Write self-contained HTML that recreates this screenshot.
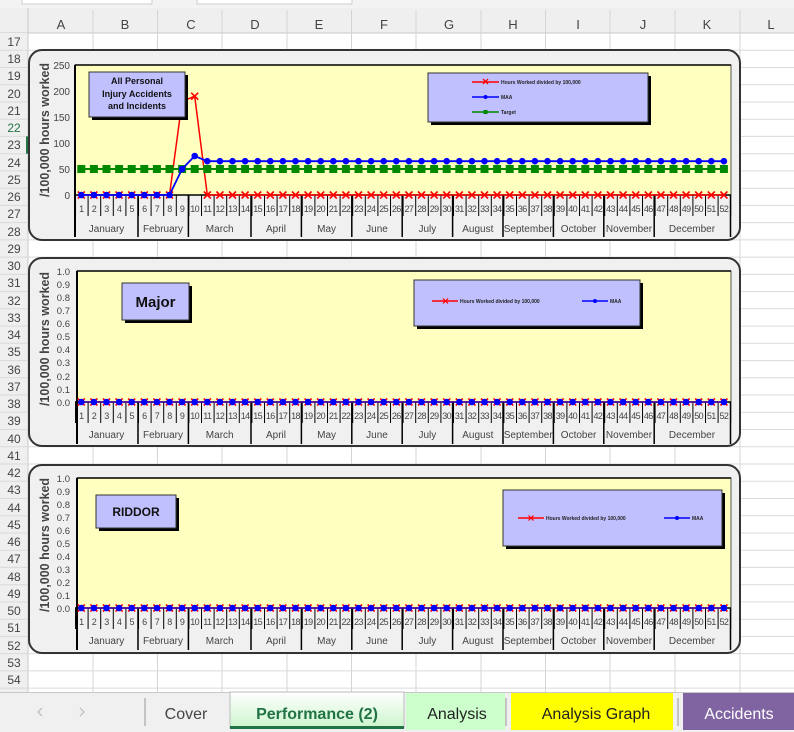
<!DOCTYPE html>
<html><head><meta charset="utf-8"><style>
html,body{margin:0;padding:0;width:794px;height:732px;overflow:hidden;background:#fff}
svg{display:block;font-family:"Liberation Sans",sans-serif}
</style></head><body>
<svg width="794" height="732" viewBox="0 0 794 732" xmlns="http://www.w3.org/2000/svg">
<defs>
<pattern id="tk" x="75" y="0" width="12.6" height="40" patternUnits="userSpaceOnUse"><rect x="0" y="0" width="1" height="40" fill="#000"/></pattern>
<marker id="mx" markerWidth="10" markerHeight="10" refX="5" refY="5" markerUnits="userSpaceOnUse"><path d="M1.5 1.5L8.5 8.5M8.5 1.5L1.5 8.5" stroke="#f00" stroke-width="1.6"/></marker>
<marker id="md" markerWidth="10" markerHeight="10" refX="5" refY="5" markerUnits="userSpaceOnUse"><circle cx="5" cy="5" r="3.3" fill="#00f"/></marker>
<marker id="ms" markerWidth="10" markerHeight="10" refX="5" refY="5" markerUnits="userSpaceOnUse"><rect x="1" y="1" width="8" height="8" fill="#080"/></marker>
</defs>
<rect x="0" y="0" width="794" height="8" fill="#f3f3f3"/>
<rect x="22" y="-2" width="130" height="6" fill="#fff" stroke="#ccc"/>
<rect x="197" y="-2" width="155" height="6" fill="#fff" stroke="#ccc"/>
<rect x="0" y="8" width="794" height="25" fill="#efefef"/>
<line x1="0" y1="33" x2="794" y2="33" stroke="#c8c8c8"/>
<rect x="0" y="33" width="28" height="660" fill="#efefef"/>
<line x1="28" y1="8" x2="28" y2="693" stroke="#c8c8c8"/>
<g stroke="#d4d4d4">
<line x1="93" y1="10" x2="93" y2="693"/><line x1="157.5" y1="10" x2="157.5" y2="693"/><line x1="222" y1="10" x2="222" y2="693"/><line x1="287" y1="10" x2="287" y2="693"/><line x1="351.5" y1="10" x2="351.5" y2="693"/><line x1="416" y1="10" x2="416" y2="693"/><line x1="481" y1="10" x2="481" y2="693"/><line x1="545.5" y1="10" x2="545.5" y2="693"/><line x1="610" y1="10" x2="610" y2="693"/><line x1="675" y1="10" x2="675" y2="693"/><line x1="740" y1="10" x2="740" y2="693"/>
</g>
<g stroke="#dadada">
<line x1="0" y1="50.2" x2="794" y2="50.2"/><line x1="0" y1="67.5" x2="794" y2="67.5"/><line x1="0" y1="84.7" x2="794" y2="84.7"/><line x1="0" y1="102" x2="794" y2="102"/><line x1="0" y1="119.2" x2="794" y2="119.2"/><line x1="0" y1="136.4" x2="794" y2="136.4"/><line x1="0" y1="153.7" x2="794" y2="153.7"/><line x1="0" y1="170.9" x2="794" y2="170.9"/><line x1="0" y1="188.2" x2="794" y2="188.2"/><line x1="0" y1="205.4" x2="794" y2="205.4"/><line x1="0" y1="222.6" x2="794" y2="222.6"/><line x1="0" y1="239.9" x2="794" y2="239.9"/><line x1="0" y1="257.1" x2="794" y2="257.1"/><line x1="0" y1="274.4" x2="794" y2="274.4"/><line x1="0" y1="291.6" x2="794" y2="291.6"/><line x1="0" y1="308.8" x2="794" y2="308.8"/><line x1="0" y1="326.1" x2="794" y2="326.1"/><line x1="0" y1="343.3" x2="794" y2="343.3"/><line x1="0" y1="360.6" x2="794" y2="360.6"/><line x1="0" y1="377.8" x2="794" y2="377.8"/><line x1="0" y1="395" x2="794" y2="395"/><line x1="0" y1="412.3" x2="794" y2="412.3"/><line x1="0" y1="429.5" x2="794" y2="429.5"/><line x1="0" y1="446.8" x2="794" y2="446.8"/><line x1="0" y1="464" x2="794" y2="464"/><line x1="0" y1="481.2" x2="794" y2="481.2"/><line x1="0" y1="498.5" x2="794" y2="498.5"/><line x1="0" y1="515.7" x2="794" y2="515.7"/><line x1="0" y1="533" x2="794" y2="533"/><line x1="0" y1="550.2" x2="794" y2="550.2"/><line x1="0" y1="567.4" x2="794" y2="567.4"/><line x1="0" y1="584.7" x2="794" y2="584.7"/><line x1="0" y1="601.9" x2="794" y2="601.9"/><line x1="0" y1="619.2" x2="794" y2="619.2"/><line x1="0" y1="636.4" x2="794" y2="636.4"/><line x1="0" y1="653.6" x2="794" y2="653.6"/><line x1="0" y1="670.9" x2="794" y2="670.9"/><line x1="0" y1="688.1" x2="794" y2="688.1"/>
</g>
<rect x="26" y="136.4" width="3" height="17.3" fill="#217346"/>
<g font-size="13" fill="#444" text-anchor="middle">
<text x="61" y="29">A</text><text x="125" y="29">B</text><text x="191" y="29">C</text><text x="255" y="29">D</text><text x="319" y="29">E</text><text x="384" y="29">F</text><text x="449" y="29">G</text><text x="513" y="29">H</text><text x="578" y="29">I</text><text x="643" y="29">J</text><text x="707" y="29">K</text><text x="771" y="29">L</text>
</g>
<g font-size="12" fill="#444" text-anchor="middle">
<text x="14" y="46">17</text><text x="14" y="63">18</text><text x="14" y="80">19</text><text x="14" y="98">20</text><text x="14" y="115">21</text><text x="14" y="132" fill="#217346">22</text><text x="14" y="149">23</text><text x="14" y="167">24</text><text x="14" y="184">25</text><text x="14" y="201">26</text><text x="14" y="218">27</text><text x="14" y="236">28</text><text x="14" y="253">29</text><text x="14" y="270">30</text><text x="14" y="287">31</text><text x="14" y="305">32</text><text x="14" y="322">33</text><text x="14" y="339">34</text><text x="14" y="356">35</text><text x="14" y="374">36</text><text x="14" y="391">37</text><text x="14" y="408">38</text><text x="14" y="425">39</text><text x="14" y="443">40</text><text x="14" y="460">41</text><text x="14" y="477">42</text><text x="14" y="494">43</text><text x="14" y="512">44</text><text x="14" y="529">45</text><text x="14" y="546">46</text><text x="14" y="563">47</text><text x="14" y="581">48</text><text x="14" y="598">49</text><text x="14" y="615">50</text><text x="14" y="632">51</text><text x="14" y="650">52</text><text x="14" y="667">53</text><text x="14" y="684">54</text>
</g>

<rect x="29" y="50" width="711" height="190" rx="13" fill="#f0f0f0" stroke="#333" stroke-width="2"/>
<rect x="75" y="65" width="656" height="130" fill="#ffffc0" stroke="#555" stroke-width="1"/>
<line x1="75" y1="65" x2="731" y2="65" stroke="#000" stroke-width="1.5"/>
<line x1="75" y1="65" x2="75" y2="237" stroke="#000" stroke-width="2"/>
<line x1="75" y1="195" x2="731" y2="195" stroke="#000" stroke-width="1.5"/>
<rect x="75" y="195" width="656.5" height="21" fill="url(#tk)"/>
<g stroke="#000" stroke-width="1.5"><line x1="138" y1="195" x2="138" y2="237"/><line x1="188.4" y1="195" x2="188.4" y2="237"/><line x1="251" y1="195" x2="251" y2="237"/><line x1="301.4" y1="195" x2="301.4" y2="237"/><line x1="351.8" y1="195" x2="351.8" y2="237"/><line x1="402.2" y1="195" x2="402.2" y2="237"/><line x1="452.6" y1="195" x2="452.6" y2="237"/><line x1="503" y1="195" x2="503" y2="237"/><line x1="553.4" y1="195" x2="553.4" y2="237"/><line x1="603.8" y1="195" x2="603.8" y2="237"/><line x1="654.2" y1="195" x2="654.2" y2="237"/><line x1="730.5" y1="195" x2="730.5" y2="237"/></g>
<g font-size="10" fill="#444" text-anchor="end"><text x="70" y="69">250</text><text x="70" y="95">200</text><text x="70" y="121">150</text><text x="70" y="147">100</text><text x="70" y="173">50</text><text x="70" y="199">0</text></g>
<text transform="translate(49,130) rotate(-90)" font-size="12.5" font-weight="bold" fill="#444" text-anchor="middle">/100,000 hours worked</text>
<text font-size="9" fill="#444" text-anchor="middle" letter-spacing="-0.6" y="212"><tspan x="81.3">1</tspan><tspan x="93.9">2</tspan><tspan x="106.5">3</tspan><tspan x="119.1">4</tspan><tspan x="131.7">5</tspan><tspan x="144.3">6</tspan><tspan x="156.9">7</tspan><tspan x="169.5">8</tspan><tspan x="182.1">9</tspan><tspan x="194.7">10</tspan><tspan x="207.3">11</tspan><tspan x="219.9">12</tspan><tspan x="232.5">13</tspan><tspan x="245.1">14</tspan><tspan x="257.7">15</tspan><tspan x="270.3">16</tspan><tspan x="282.9">17</tspan><tspan x="295.5">18</tspan><tspan x="308.1">19</tspan><tspan x="320.7">20</tspan><tspan x="333.3">21</tspan><tspan x="345.9">22</tspan><tspan x="358.5">23</tspan><tspan x="371.1">24</tspan><tspan x="383.7">25</tspan><tspan x="396.3">26</tspan><tspan x="408.9">27</tspan><tspan x="421.5">28</tspan><tspan x="434.1">29</tspan><tspan x="446.7">30</tspan><tspan x="459.3">31</tspan><tspan x="471.9">32</tspan><tspan x="484.5">33</tspan><tspan x="497.1">34</tspan><tspan x="509.7">35</tspan><tspan x="522.3">36</tspan><tspan x="534.9">37</tspan><tspan x="547.5">38</tspan><tspan x="560.1">39</tspan><tspan x="572.7">40</tspan><tspan x="585.3">41</tspan><tspan x="597.9">42</tspan><tspan x="610.5">43</tspan><tspan x="623.1">44</tspan><tspan x="635.7">45</tspan><tspan x="648.3">46</tspan><tspan x="660.9">47</tspan><tspan x="673.5">48</tspan><tspan x="686.1">49</tspan><tspan x="698.7">50</tspan><tspan x="711.3">51</tspan><tspan x="723.9">52</tspan></text>
<text font-size="10" fill="#444" text-anchor="middle" y="232"><tspan x="106.5">January</tspan><tspan x="163">February</tspan><tspan x="219.7">March</tspan><tspan x="276">April</tspan><tspan x="326.6">May</tspan><tspan x="377">June</tspan><tspan x="427.4">July</tspan><tspan x="477.8">August</tspan><tspan x="528.2">September</tspan><tspan x="578.6">October</tspan><tspan x="629">November</tspan><tspan x="692">December</tspan></text>
<path d="M81.3 195h12.6h12.6h12.6h12.6h12.6h12.6h12.6L182.1 101.4L194.7 96.2L207.3 195h12.6h12.6h12.6h12.6h12.6h12.6h12.6h12.6h12.6h12.6h12.6h12.6h12.6h12.6h12.6h12.6h12.6h12.6h12.6h12.6h12.6h12.6h12.6h12.6h12.6h12.6h12.6h12.6h12.6h12.6h12.6h12.6h12.6h12.6h12.6h12.6h12.6h12.6h12.6h12.6h12.6" fill="none" stroke="#f00" stroke-width="1.5" marker-start="url(#mx)" marker-mid="url(#mx)" marker-end="url(#mx)"/>
<path d="M81.3 169h12.6h12.6h12.6h12.6h12.6h12.6h12.6h12.6h12.6h12.6h12.6h12.6h12.6h12.6h12.6h12.6h12.6h12.6h12.6h12.6h12.6h12.6h12.6h12.6h12.6h12.6h12.6h12.6h12.6h12.6h12.6h12.6h12.6h12.6h12.6h12.6h12.6h12.6h12.6h12.6h12.6h12.6h12.6h12.6h12.6h12.6h12.6h12.6h12.6h12.6h12.6" fill="none" stroke="#080" stroke-width="2" marker-start="url(#ms)" marker-mid="url(#ms)" marker-end="url(#ms)"/>
<path d="M81.3 195h12.6h12.6h12.6h12.6h12.6h12.6h12.6L182.1 169L194.7 156L207.3 161.2h12.6h12.6h12.6h12.6h12.6h12.6h12.6h12.6h12.6h12.6h12.6h12.6h12.6h12.6h12.6h12.6h12.6h12.6h12.6h12.6h12.6h12.6h12.6h12.6h12.6h12.6h12.6h12.6h12.6h12.6h12.6h12.6h12.6h12.6h12.6h12.6h12.6h12.6h12.6h12.6h12.6" fill="none" stroke="#00f" stroke-width="1.8" marker-start="url(#md)" marker-mid="url(#md)" marker-end="url(#md)"/>
<rect x="92" y="75" width="96" height="45" fill="#000"/>
<rect x="89" y="72" width="96" height="45" fill="#c0c0ff" stroke="#333"/>
<text font-size="9" font-weight="bold" fill="#111" text-anchor="middle"><tspan x="137" y="84">All Personal</tspan><tspan x="137" y="97">Injury Accidents</tspan><tspan x="137" y="109">and Incidents</tspan></text>
<rect x="431" y="76" width="220" height="49" fill="#000"/>
<rect x="428" y="73" width="220" height="49" fill="#c0c0ff" stroke="#333"/>
<g stroke-width="1.5"><line x1="472" y1="82" x2="499" y2="82" stroke="#f00"/><line x1="472" y1="97" x2="499" y2="97" stroke="#00f"/><line x1="472" y1="112" x2="499" y2="112" stroke="#080"/></g>
<path d="M483 79l5 5M488 79l-5 5" stroke="#f00" stroke-width="1.3"/><circle cx="485.5" cy="97" r="2" fill="#00f"/><rect x="483.5" y="110" width="4" height="4" fill="#080"/>
<g font-size="5" font-weight="bold" fill="#222"><text x="501" y="84">Hours Worked divided by 100,000</text><text x="501" y="99">MAA</text><text x="501" y="114">Target</text></g>

<rect x="29" y="258" width="711" height="188" rx="13" fill="#f0f0f0" stroke="#333" stroke-width="2"/>
<rect x="77" y="271" width="654" height="131" fill="#ffffc0" stroke="#555"/>
<line x1="77" y1="271" x2="731" y2="271" stroke="#000" stroke-width="1.5"/>
<line x1="77" y1="271" x2="77" y2="444" stroke="#000" stroke-width="2"/>
<line x1="75" y1="402" x2="731" y2="402" stroke="#000" stroke-width="1.5"/>
<rect x="75" y="402" width="656.5" height="21" fill="url(#tk)"/>
<g stroke="#000" stroke-width="1.5"><line x1="138" y1="402" x2="138" y2="444"/><line x1="188.4" y1="402" x2="188.4" y2="444"/><line x1="251" y1="402" x2="251" y2="444"/><line x1="301.4" y1="402" x2="301.4" y2="444"/><line x1="351.8" y1="402" x2="351.8" y2="444"/><line x1="402.2" y1="402" x2="402.2" y2="444"/><line x1="452.6" y1="402" x2="452.6" y2="444"/><line x1="503" y1="402" x2="503" y2="444"/><line x1="553.4" y1="402" x2="553.4" y2="444"/><line x1="603.8" y1="402" x2="603.8" y2="444"/><line x1="654.2" y1="402" x2="654.2" y2="444"/><line x1="730.5" y1="402" x2="730.5" y2="444"/></g>
<g font-size="9.5" fill="#444" text-anchor="end"><text x="70" y="275">1.0</text><text x="70" y="288">0.9</text><text x="70" y="301">0.8</text><text x="70" y="314">0.7</text><text x="70" y="327">0.6</text><text x="70" y="340">0.5</text><text x="70" y="353">0.4</text><text x="70" y="366">0.3</text><text x="70" y="380">0.2</text><text x="70" y="393">0.1</text><text x="70" y="406">0.0</text></g>
<text transform="translate(49,339) rotate(-90)" font-size="12.5" font-weight="bold" fill="#444" text-anchor="middle">/100,000 hours worked</text>
<text font-size="9" fill="#444" text-anchor="middle" letter-spacing="-0.6" y="419"><tspan x="81.3">1</tspan><tspan x="93.9">2</tspan><tspan x="106.5">3</tspan><tspan x="119.1">4</tspan><tspan x="131.7">5</tspan><tspan x="144.3">6</tspan><tspan x="156.9">7</tspan><tspan x="169.5">8</tspan><tspan x="182.1">9</tspan><tspan x="194.7">10</tspan><tspan x="207.3">11</tspan><tspan x="219.9">12</tspan><tspan x="232.5">13</tspan><tspan x="245.1">14</tspan><tspan x="257.7">15</tspan><tspan x="270.3">16</tspan><tspan x="282.9">17</tspan><tspan x="295.5">18</tspan><tspan x="308.1">19</tspan><tspan x="320.7">20</tspan><tspan x="333.3">21</tspan><tspan x="345.9">22</tspan><tspan x="358.5">23</tspan><tspan x="371.1">24</tspan><tspan x="383.7">25</tspan><tspan x="396.3">26</tspan><tspan x="408.9">27</tspan><tspan x="421.5">28</tspan><tspan x="434.1">29</tspan><tspan x="446.7">30</tspan><tspan x="459.3">31</tspan><tspan x="471.9">32</tspan><tspan x="484.5">33</tspan><tspan x="497.1">34</tspan><tspan x="509.7">35</tspan><tspan x="522.3">36</tspan><tspan x="534.9">37</tspan><tspan x="547.5">38</tspan><tspan x="560.1">39</tspan><tspan x="572.7">40</tspan><tspan x="585.3">41</tspan><tspan x="597.9">42</tspan><tspan x="610.5">43</tspan><tspan x="623.1">44</tspan><tspan x="635.7">45</tspan><tspan x="648.3">46</tspan><tspan x="660.9">47</tspan><tspan x="673.5">48</tspan><tspan x="686.1">49</tspan><tspan x="698.7">50</tspan><tspan x="711.3">51</tspan><tspan x="723.9">52</tspan></text>
<text font-size="10" fill="#444" text-anchor="middle" y="438"><tspan x="106.5">January</tspan><tspan x="163">February</tspan><tspan x="219.7">March</tspan><tspan x="276">April</tspan><tspan x="326.6">May</tspan><tspan x="377">June</tspan><tspan x="427.4">July</tspan><tspan x="477.8">August</tspan><tspan x="528.2">September</tspan><tspan x="578.6">October</tspan><tspan x="629">November</tspan><tspan x="692">December</tspan></text>
<path d="M81.3 402h12.6h12.6h12.6h12.6h12.6h12.6h12.6h12.6h12.6h12.6h12.6h12.6h12.6h12.6h12.6h12.6h12.6h12.6h12.6h12.6h12.6h12.6h12.6h12.6h12.6h12.6h12.6h12.6h12.6h12.6h12.6h12.6h12.6h12.6h12.6h12.6h12.6h12.6h12.6h12.6h12.6h12.6h12.6h12.6h12.6h12.6h12.6h12.6h12.6h12.6h12.6" fill="none" stroke="#f00" stroke-width="1.5" marker-start="url(#mx)" marker-mid="url(#mx)" marker-end="url(#mx)"/>
<path d="M81.3 402h12.6h12.6h12.6h12.6h12.6h12.6h12.6h12.6h12.6h12.6h12.6h12.6h12.6h12.6h12.6h12.6h12.6h12.6h12.6h12.6h12.6h12.6h12.6h12.6h12.6h12.6h12.6h12.6h12.6h12.6h12.6h12.6h12.6h12.6h12.6h12.6h12.6h12.6h12.6h12.6h12.6h12.6h12.6h12.6h12.6h12.6h12.6h12.6h12.6h12.6h12.6" fill="none" stroke="#00f" stroke-width="1" marker-start="url(#md)" marker-mid="url(#md)" marker-end="url(#md)"/>
<rect x="125" y="286" width="67" height="37" fill="#000"/>
<rect x="122" y="283" width="67" height="37" fill="#c0c0ff" stroke="#333"/>
<text x="155.5" y="307" font-size="15" font-weight="bold" fill="#111" text-anchor="middle">Major</text>
<rect x="417" y="283" width="226" height="46" fill="#000"/>
<rect x="414" y="280" width="226" height="46" fill="#c0c0ff" stroke="#333"/>
<g stroke-width="1.5"><line x1="432" y1="301" x2="458" y2="301" stroke="#f00"/><line x1="582" y1="301" x2="608" y2="301" stroke="#00f"/></g>
<path d="M443 298.5l5 5M448 298.5l-5 5" stroke="#f00" stroke-width="1.2"/><circle cx="595" cy="301" r="2" fill="#00f"/>
<g font-size="5" font-weight="bold" fill="#222"><text x="460" y="303">Hours Worked divided by 100,000</text><text x="610" y="303">MAA</text></g>

<rect x="29" y="465" width="711" height="188" rx="13" fill="#f0f0f0" stroke="#333" stroke-width="2"/>
<rect x="77" y="478" width="654" height="130" fill="#ffffc0" stroke="#555"/>
<line x1="77" y1="478" x2="731" y2="478" stroke="#000" stroke-width="1.5"/>
<line x1="77" y1="478" x2="77" y2="650" stroke="#000" stroke-width="2"/>
<line x1="75" y1="608" x2="731" y2="608" stroke="#000" stroke-width="1.5"/>
<rect x="75" y="608" width="656.5" height="21" fill="url(#tk)"/>
<g stroke="#000" stroke-width="1.5"><line x1="138" y1="608" x2="138" y2="650"/><line x1="188.4" y1="608" x2="188.4" y2="650"/><line x1="251" y1="608" x2="251" y2="650"/><line x1="301.4" y1="608" x2="301.4" y2="650"/><line x1="351.8" y1="608" x2="351.8" y2="650"/><line x1="402.2" y1="608" x2="402.2" y2="650"/><line x1="452.6" y1="608" x2="452.6" y2="650"/><line x1="503" y1="608" x2="503" y2="650"/><line x1="553.4" y1="608" x2="553.4" y2="650"/><line x1="603.8" y1="608" x2="603.8" y2="650"/><line x1="654.2" y1="608" x2="654.2" y2="650"/><line x1="730.5" y1="608" x2="730.5" y2="650"/></g>
<g font-size="9.5" fill="#444" text-anchor="end"><text x="70" y="482">1.0</text><text x="70" y="495">0.9</text><text x="70" y="508">0.8</text><text x="70" y="521">0.7</text><text x="70" y="534">0.6</text><text x="70" y="547">0.5</text><text x="70" y="560">0.4</text><text x="70" y="573">0.3</text><text x="70" y="586">0.2</text><text x="70" y="599">0.1</text><text x="70" y="612">0.0</text></g>
<text transform="translate(49,545) rotate(-90)" font-size="12.5" font-weight="bold" fill="#444" text-anchor="middle">/100,000 hours worked</text>
<text font-size="9" fill="#444" text-anchor="middle" letter-spacing="-0.6" y="625"><tspan x="81.3">1</tspan><tspan x="93.9">2</tspan><tspan x="106.5">3</tspan><tspan x="119.1">4</tspan><tspan x="131.7">5</tspan><tspan x="144.3">6</tspan><tspan x="156.9">7</tspan><tspan x="169.5">8</tspan><tspan x="182.1">9</tspan><tspan x="194.7">10</tspan><tspan x="207.3">11</tspan><tspan x="219.9">12</tspan><tspan x="232.5">13</tspan><tspan x="245.1">14</tspan><tspan x="257.7">15</tspan><tspan x="270.3">16</tspan><tspan x="282.9">17</tspan><tspan x="295.5">18</tspan><tspan x="308.1">19</tspan><tspan x="320.7">20</tspan><tspan x="333.3">21</tspan><tspan x="345.9">22</tspan><tspan x="358.5">23</tspan><tspan x="371.1">24</tspan><tspan x="383.7">25</tspan><tspan x="396.3">26</tspan><tspan x="408.9">27</tspan><tspan x="421.5">28</tspan><tspan x="434.1">29</tspan><tspan x="446.7">30</tspan><tspan x="459.3">31</tspan><tspan x="471.9">32</tspan><tspan x="484.5">33</tspan><tspan x="497.1">34</tspan><tspan x="509.7">35</tspan><tspan x="522.3">36</tspan><tspan x="534.9">37</tspan><tspan x="547.5">38</tspan><tspan x="560.1">39</tspan><tspan x="572.7">40</tspan><tspan x="585.3">41</tspan><tspan x="597.9">42</tspan><tspan x="610.5">43</tspan><tspan x="623.1">44</tspan><tspan x="635.7">45</tspan><tspan x="648.3">46</tspan><tspan x="660.9">47</tspan><tspan x="673.5">48</tspan><tspan x="686.1">49</tspan><tspan x="698.7">50</tspan><tspan x="711.3">51</tspan><tspan x="723.9">52</tspan></text>
<text font-size="10" fill="#444" text-anchor="middle" y="644"><tspan x="106.5">January</tspan><tspan x="163">February</tspan><tspan x="219.7">March</tspan><tspan x="276">April</tspan><tspan x="326.6">May</tspan><tspan x="377">June</tspan><tspan x="427.4">July</tspan><tspan x="477.8">August</tspan><tspan x="528.2">September</tspan><tspan x="578.6">October</tspan><tspan x="629">November</tspan><tspan x="692">December</tspan></text>
<path d="M81.3 608h12.6h12.6h12.6h12.6h12.6h12.6h12.6h12.6h12.6h12.6h12.6h12.6h12.6h12.6h12.6h12.6h12.6h12.6h12.6h12.6h12.6h12.6h12.6h12.6h12.6h12.6h12.6h12.6h12.6h12.6h12.6h12.6h12.6h12.6h12.6h12.6h12.6h12.6h12.6h12.6h12.6h12.6h12.6h12.6h12.6h12.6h12.6h12.6h12.6h12.6h12.6" fill="none" stroke="#f00" stroke-width="1.5" marker-start="url(#mx)" marker-mid="url(#mx)" marker-end="url(#mx)"/>
<path d="M81.3 608h12.6h12.6h12.6h12.6h12.6h12.6h12.6h12.6h12.6h12.6h12.6h12.6h12.6h12.6h12.6h12.6h12.6h12.6h12.6h12.6h12.6h12.6h12.6h12.6h12.6h12.6h12.6h12.6h12.6h12.6h12.6h12.6h12.6h12.6h12.6h12.6h12.6h12.6h12.6h12.6h12.6h12.6h12.6h12.6h12.6h12.6h12.6h12.6h12.6h12.6h12.6" fill="none" stroke="#00f" stroke-width="1" marker-start="url(#md)" marker-mid="url(#md)" marker-end="url(#md)"/>
<rect x="99" y="498" width="80" height="33" fill="#000"/>
<rect x="96" y="495" width="80" height="33" fill="#c0c0ff" stroke="#333"/>
<text x="136" y="516" font-size="12" font-weight="bold" fill="#111" text-anchor="middle">RIDDOR</text>
<rect x="506" y="493" width="219" height="56" fill="#000"/>
<rect x="503" y="490" width="219" height="56" fill="#c0c0ff" stroke="#333"/>
<g stroke-width="1.5"><line x1="518" y1="518" x2="544" y2="518" stroke="#f00"/><line x1="664" y1="518" x2="690" y2="518" stroke="#00f"/></g>
<path d="M528.5 515.5l5 5M533.5 515.5l-5 5" stroke="#f00" stroke-width="1.2"/><circle cx="677" cy="518" r="2" fill="#00f"/>
<g font-size="5" font-weight="bold" fill="#222"><text x="546" y="520">Hours Worked divided by 100,000</text><text x="692" y="520">MAA</text></g>

<rect x="0" y="692" width="794" height="40" fill="#f0f0f0"/>
<line x1="0" y1="692.5" x2="794" y2="692.5" stroke="#c8c8c8"/>
<path d="M42 708l-4 4l4 4" fill="none" stroke="#bbb" stroke-width="1.2"/>
<path d="M80 708l4 4l-4 4" fill="none" stroke="#bbb" stroke-width="1.2"/>
<line x1="145" y1="698" x2="145" y2="726" stroke="#999"/>
<rect x="146" y="694" width="83" height="36" fill="#f0f0f0"/>
<defs><linearGradient id="pg" x1="0" y1="0" x2="0" y2="1"><stop offset="0" stop-color="#fff"/><stop offset="1" stop-color="#ccf5cc"/></linearGradient></defs>
<rect x="230" y="692" width="174" height="36" fill="url(#pg)" stroke="#bbb"/>
<rect x="230" y="726" width="174" height="3" fill="#217346"/>
<rect x="406" y="693" width="99" height="37" fill="#ccffcc"/>
<line x1="506" y1="698" x2="506" y2="726" stroke="#999"/>
<rect x="511" y="693" width="162" height="37" fill="#ffff00"/>
<line x1="678" y1="698" x2="678" y2="726" stroke="#999"/>
<rect x="683" y="693" width="111" height="37" fill="#8064a2"/>
<g font-size="16" text-anchor="middle">
<text x="186" y="719" fill="#444">Cover</text>
<text x="317" y="719" fill="#217346" font-weight="bold">Performance (2)</text>
<text x="457" y="719" fill="#222">Analysis</text>
<text x="596" y="719" fill="#222">Analysis Graph</text>
<text x="739" y="719" fill="#fff">Accidents</text>
</g>
</svg>
</body></html>
